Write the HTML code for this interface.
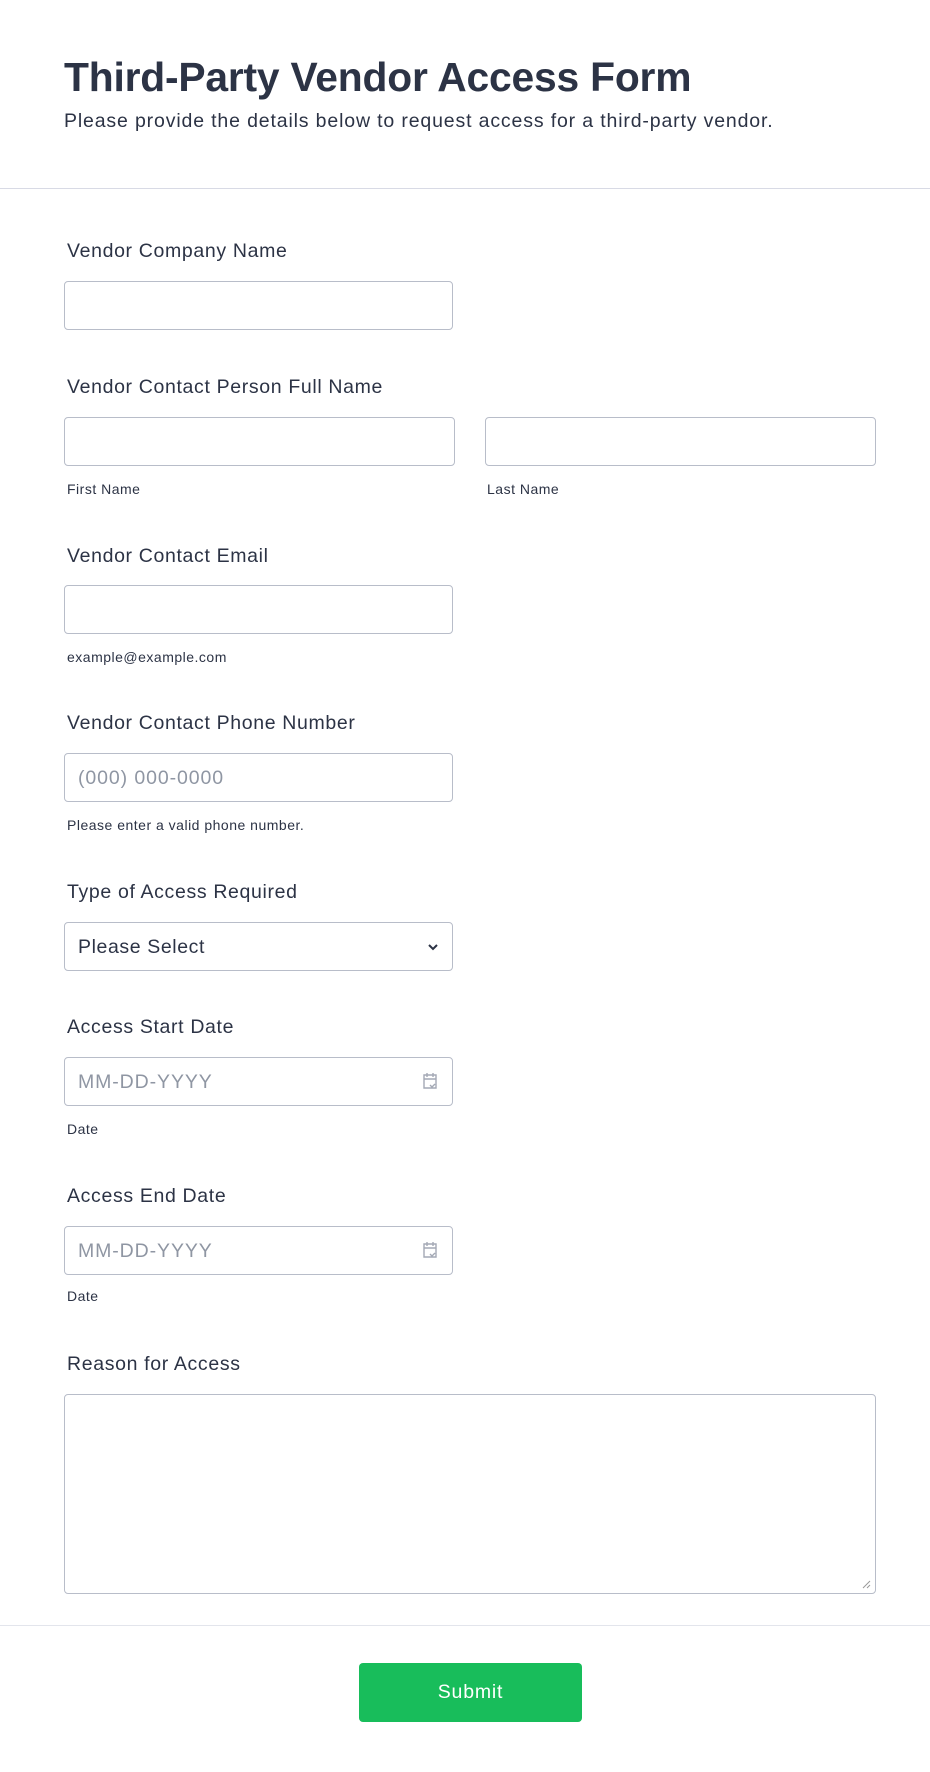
<!DOCTYPE html>
<html><head><meta charset="utf-8"><style>
*{box-sizing:border-box;margin:0;padding:0}
body{width:930px;height:1772px;background:#fff;font-family:"Liberation Sans",Arial,sans-serif;color:#2c3345;position:relative;overflow:hidden}
.a{position:absolute;white-space:nowrap}
h1{position:absolute;left:64px;top:54px;font-size:40.8px;font-weight:700;letter-spacing:-0.2px;color:#2c3345}
.sub{left:64px;top:110px;font-size:19.5px;letter-spacing:0.85px}
.hr{position:absolute;left:0;width:930px;height:1px;background:#d8dae5}
.lbl{left:67px;font-size:19.5px;letter-spacing:0.65px;transform:translateY(-11px)}
.box{position:absolute;border:1px solid #b8bdc9;border-radius:4px;background:#fff}
.sl{left:67px;font-size:14px;letter-spacing:0.5px;transform:translateY(-8px)}
.ph{position:absolute;left:13px;top:13px;font-size:19.5px;letter-spacing:0.9px;color:#8f96a3}
.btn{position:absolute;left:359px;top:1663px;width:223px;height:59px;background:#18bd5b;border-radius:4px;color:#fff;font-size:19.5px;letter-spacing:0.8px;text-align:center;line-height:59px}
</style></head><body>
<h1>Third-Party Vendor Access Form</h1>
<div class="a sub">Please provide the details below to request access for a third-party vendor.</div>
<div class="hr" style="top:188px"></div>

<div class="a lbl" style="top:251px">Vendor Company Name</div>
<div class="box" style="left:64px;top:281px;width:389px;height:49px"></div>

<div class="a lbl" style="top:387px">Vendor Contact Person Full Name</div>
<div class="box" style="left:64px;top:417px;width:391px;height:49px"></div>
<div class="box" style="left:485px;top:417px;width:391px;height:49px"></div>
<div class="a sl" style="top:489px">First Name</div>
<div class="a sl" style="top:489px;left:487px">Last Name</div>

<div class="a lbl" style="top:556px">Vendor Contact Email</div>
<div class="box" style="left:64px;top:585px;width:389px;height:49px"></div>
<div class="a sl" style="top:657px">example@example.com</div>

<div class="a lbl" style="top:723px">Vendor Contact Phone Number</div>
<div class="box" style="left:64px;top:753px;width:389px;height:49px"><span class="ph">(000) 000-0000</span></div>
<div class="a sl" style="top:825px">Please enter a valid phone number.</div>

<div class="a lbl" style="top:892px">Type of Access Required</div>
<div class="box" style="left:64px;top:922px;width:389px;height:49px"><span class="ph" style="color:#2c3345;letter-spacing:0.6px">Please Select</span>
<svg style="position:absolute;right:13px;top:19px" width="12" height="10" viewBox="0 0 12 10"><path d="M2 3l4 4 4-4" fill="none" stroke="#2c3345" stroke-width="2"/></svg></div>

<div class="a lbl" style="top:1027px">Access Start Date</div>
<div class="box" style="left:64px;top:1057px;width:389px;height:49px"><span class="ph">MM-DD-YYYY</span>
<svg style="position:absolute;right:14px;top:14px" width="16" height="18" viewBox="0 0 16 18"><path d="M2 3h12v13H2z M2 7h12 M5 1v4 M11 1v4 M8 13l2 2 3-3" fill="none" stroke="#a4a9b5" stroke-width="1.4"/></svg></div>
<div class="a sl" style="top:1129px">Date</div>

<div class="a lbl" style="top:1196px">Access End Date</div>
<div class="box" style="left:64px;top:1226px;width:389px;height:49px"><span class="ph">MM-DD-YYYY</span>
<svg style="position:absolute;right:14px;top:14px" width="16" height="18" viewBox="0 0 16 18"><path d="M2 3h12v13H2z M2 7h12 M5 1v4 M11 1v4 M8 13l2 2 3-3" fill="none" stroke="#a4a9b5" stroke-width="1.4"/></svg></div>
<div class="a sl" style="top:1296px">Date</div>

<div class="a lbl" style="top:1364px">Reason for Access</div>
<div class="box" style="left:64px;top:1394px;width:812px;height:200px">
<svg style="position:absolute;right:4px;bottom:4px" width="9" height="9" viewBox="0 0 9 9"><path d="M8 1L1 8M8 5L5 8" stroke="#999" stroke-width="1"/></svg></div>

<div class="hr" style="top:1625px;background:#e3e5ec"></div>
<div class="btn">Submit</div>
</body></html>
